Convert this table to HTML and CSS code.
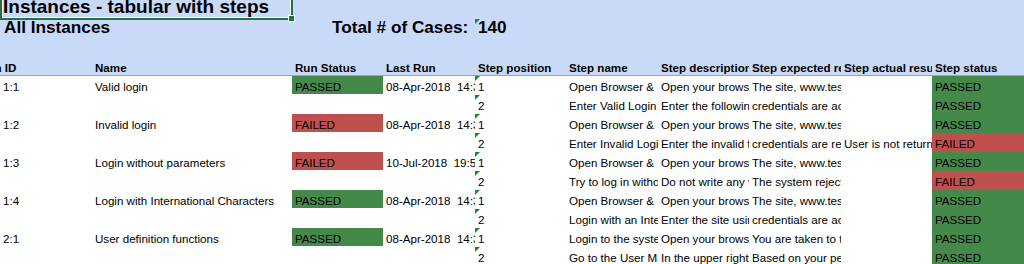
FILE: index.html
```html
<!DOCTYPE html>
<html>
<head>
<meta charset="utf-8">
<title>Instances - tabular with steps</title>
<link rel="stylesheet" href="styles.css">
</head>
<body>
<div class="sheet">
  <div class="top">
    <div class="row title-row">
      <div class="c title">Instances - tabular with steps
        <span class="sel"><span class="handle"></span></span>
      </div>
    </div>
    <div class="row sub-row">
      <div class="c sub span-ab">All Instances</div>
      <div class="c sub total">Total # of Cases: </div>
      <div class="c sub tri">140</div>
    </div>
    <div class="row empty-row"></div>
    <div class="row head">
      <div class="c runid">Run ID</div>
      <div class="c">Name</div>
      <div class="c">Run Status</div>
      <div class="c">Last Run</div>
      <div class="c">Step position</div>
      <div class="c">Step name</div>
      <div class="c">Step description</div>
      <div class="c">Step expected result</div>
      <div class="c">Step actual result</div>
      <div class="c">Step status</div>
    </div>
  </div>

  <div class="data">
    <div class="row">
      <div class="c">1:1</div><div class="c">Valid login</div><div class="c st pass">PASSED</div><div class="c date">08-Apr-2018  14:35:12</div>
      <div class="c tri">1</div><div class="c">Open Browser &amp; Navigate</div><div class="c">Open your browser and navigate</div><div class="c">The site, www.testsite.com opens</div><div class="c"></div><div class="c ss pass">PASSED</div>
    </div>
    <div class="row">
      <div class="c"></div><div class="c"></div><div class="c"></div><div class="c"></div>
      <div class="c tri">2</div><div class="c">Enter Valid Login</div><div class="c">Enter the following fields</div><div class="c">credentials are accepted</div><div class="c"></div><div class="c ss pass">PASSED</div>
    </div>
    <div class="row">
      <div class="c">1:2</div><div class="c">Invalid login</div><div class="c st fail">FAILED</div><div class="c date">08-Apr-2018  14:36:40</div>
      <div class="c tri">1</div><div class="c">Open Browser &amp; Navigate</div><div class="c">Open your browser and navigate</div><div class="c">The site, www.testsite.com opens</div><div class="c"></div><div class="c ss pass">PASSED</div>
    </div>
    <div class="row">
      <div class="c"></div><div class="c"></div><div class="c"></div><div class="c"></div>
      <div class="c tri">2</div><div class="c">Enter Invalid Login</div><div class="c">Enter the invalid fields</div><div class="c">credentials are rejected</div><div class="c">User is not returned</div><div class="c ss fail">FAILED</div>
    </div>
    <div class="row">
      <div class="c">1:3</div><div class="c">Login without parameters</div><div class="c st fail">FAILED</div><div class="c date">10-Jul-2018  19:52:03</div>
      <div class="c tri">1</div><div class="c">Open Browser &amp; Navigate</div><div class="c">Open your browser and navigate</div><div class="c">The site, www.testsite.com opens</div><div class="c"></div><div class="c ss pass">PASSED</div>
    </div>
    <div class="row">
      <div class="c"></div><div class="c"></div><div class="c"></div><div class="c"></div>
      <div class="c tri">2</div><div class="c">Try to log in without parameters</div><div class="c">Do not write any  value</div><div class="c">The system rejects the login</div><div class="c"></div><div class="c ss fail">FAILED</div>
    </div>
    <div class="row">
      <div class="c">1:4</div><div class="c">Login with International Characters</div><div class="c st pass">PASSED</div><div class="c date">08-Apr-2018  14:38:21</div>
      <div class="c tri">1</div><div class="c">Open Browser &amp; Navigate</div><div class="c">Open your browser and navigate</div><div class="c">The site, www.testsite.com opens</div><div class="c"></div><div class="c ss pass">PASSED</div>
    </div>
    <div class="row">
      <div class="c"></div><div class="c"></div><div class="c"></div><div class="c"></div>
      <div class="c tri">2</div><div class="c">Login with an International user</div><div class="c">Enter the site using</div><div class="c">credentials are accepted</div><div class="c"></div><div class="c ss pass">PASSED</div>
    </div>
    <div class="row">
      <div class="c">2:1</div><div class="c">User definition functions</div><div class="c st pass">PASSED</div><div class="c date">08-Apr-2018  14:39:55</div>
      <div class="c tri">1</div><div class="c">Login to the system</div><div class="c">Open your browser and login</div><div class="c">You are taken to the main page</div><div class="c"></div><div class="c ss pass">PASSED</div>
    </div>
    <div class="row">
      <div class="c"></div><div class="c"></div><div class="c"></div><div class="c"></div>
      <div class="c tri">2</div><div class="c">Go to the User Management</div><div class="c">In the upper right corner</div><div class="c">Based on your permissions</div><div class="c"></div><div class="c ss pass">PASSED</div>
    </div>
  </div>
</div>
</body>
</html>
```

FILE: styles.css
```css
html, body {
  margin: 0;
  padding: 0;
  background: #ffffff;
}

body {
  font-family: "Liberation Sans", Arial, sans-serif;
  font-size: 11.6px;
  color: #000000;
  width: 1024px;
  height: 264px;
  overflow: hidden;
}

.sheet {
  width: 1024px;
}

.top {
  background: #c9daf8;
}

.row {
  display: grid;
  grid-template-columns: 92px 200px 91px 92px 91px 92px 91px 92px 91px 92px;
  height: 19px;
  box-sizing: border-box;
}

.c {
  position: relative;
  overflow: hidden;
  white-space: nowrap;
  padding: 4px 3px 0;
  line-height: 14px;
  box-sizing: border-box;
  height: 19px;
}

/* Title row */
.title-row .title {
  grid-column: 1 / 3;
  font-size: 19px;
  font-weight: bold;
  padding: 0 0 0 3px;
  line-height: 14px;
  overflow: visible;
}

.sel {
  position: absolute;
  left: 0;
  top: -3px;
  width: 293px;
  height: 23px;
  box-sizing: border-box;
  border: 2px solid #217346;
  box-shadow: inset 0 0 0 1px #ffffff;
  pointer-events: none;
}

.handle {
  position: absolute;
  right: -4px;
  bottom: -4px;
  width: 5px;
  height: 5px;
  background: #217346;
  border: 1px solid #ffffff;
}

/* Second row */
.sub {
  font-size: 17.2px;
  font-weight: bold;
  padding: 0 0 0 4px;
  line-height: 17px;
  overflow: visible;
}

.span-ab {
  grid-column: 1 / 3;
}

.total {
  grid-column: 3 / 5;
  padding-left: 40px;
}

.sub.tri {
  padding-left: 3px;
}

/* Header row */
.head {
  font-weight: bold;
  border-bottom: 1px solid #a3a3a3;
}

.head .c {
  height: 18px;
}

.head .runid {
  text-indent: -24px;
}

/* Data */
.date {
  white-space: pre;
}

.st.pass {
  background: #44884a;
  border-bottom: 1px solid #ffffff;
}

.st.fail {
  background: #c0504d;
  border-bottom: 1px solid #ffffff;
}

.ss.pass {
  background: #44884a;
}

.ss.fail {
  background: #c0504d;
}

/* Excel green error indicator */
.tri::before {
  content: "";
  position: absolute;
  left: 0;
  top: 0;
  width: 0;
  height: 0;
  border-top: 5px solid #1a8a2e;
  border-right: 5px solid transparent;
}
```
